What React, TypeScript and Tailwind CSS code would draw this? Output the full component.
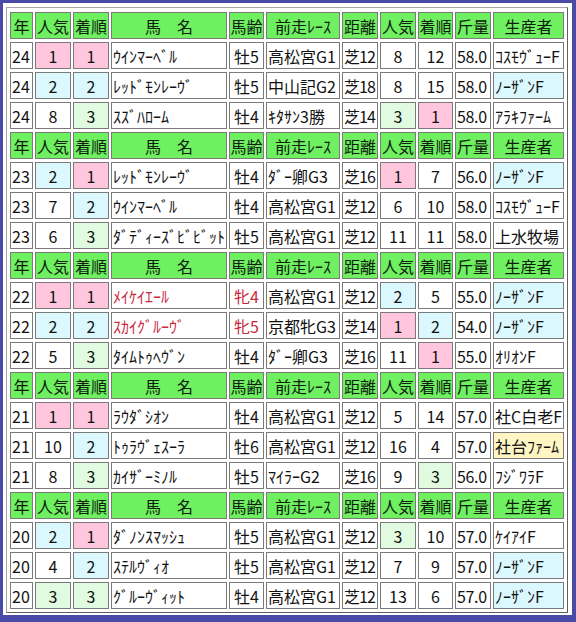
const HEAD = ["年", "人気", "着順", "馬　名", "馬齢", "前走ﾚｰｽ", "距離", "人気", "着順", "斤量", "生産者"];

// one tone letter per column: w white, p pink, b blue, g green, y yellow
type Row = { cells: string[]; tones: string; red?: boolean };

const GROUPS: Row[][] = [
  [
    { cells: ["24", "1", "1", "ｳｲﾝﾏｰﾍﾞﾙ", "牡5", "高松宮G1", "芝12", "8", "12", "58.0", "ｺｽﾓｳﾞｭｰF"], tones: "wppwwwwwwww" },
    { cells: ["24", "2", "2", "ﾚｯﾄﾞﾓﾝﾚｰｳﾞ", "牡5", "中山記G2", "芝18", "8", "15", "58.0", "ﾉｰｻﾞﾝF"], tones: "wbbwwwwwwwb" },
    { cells: ["24", "8", "3", "ｽｽﾞﾊﾛｰﾑ", "牡4", "ｷﾀｻﾝ3勝", "芝14", "3", "1", "58.0", "ｱﾗｷﾌｧｰﾑ"], tones: "wwgwwwwgpww" },
  ],
  [
    { cells: ["23", "2", "1", "ﾚｯﾄﾞﾓﾝﾚｰｳﾞ", "牡4", "ﾀﾞｰ卿G3", "芝16", "1", "7", "56.0", "ﾉｰｻﾞﾝF"], tones: "wbpwwwwpwwb" },
    { cells: ["23", "7", "2", "ｳｲﾝﾏｰﾍﾞﾙ", "牡4", "高松宮G1", "芝12", "6", "10", "58.0", "ｺｽﾓｳﾞｭｰF"], tones: "wwbwwwwwwww" },
    { cells: ["23", "6", "3", "ﾀﾞﾃﾞｨｰｽﾞﾋﾞﾋﾞｯﾄ", "牡5", "高松宮G1", "芝12", "11", "11", "58.0", "上水牧場"], tones: "wwgwwwwwwww" },
  ],
  [
    { cells: ["22", "1", "1", "ﾒｲｹｲｴｰﾙ", "牝4", "高松宮G1", "芝12", "2", "5", "55.0", "ﾉｰｻﾞﾝF"], tones: "wppwwwwbwwb", red: true },
    { cells: ["22", "2", "2", "ｽｶｲｸﾞﾙｰｳﾞ", "牝5", "京都牝G3", "芝14", "1", "2", "54.0", "ﾉｰｻﾞﾝF"], tones: "wbbwwwwpbwb", red: true },
    { cells: ["22", "5", "3", "ﾀｲﾑﾄｩﾍｳﾞﾝ", "牡4", "ﾀﾞｰ卿G3", "芝16", "11", "1", "55.0", "ｵﾘｵﾝF"], tones: "wwgwwwwwpww" },
  ],
  [
    { cells: ["21", "1", "1", "ﾗｳﾀﾞｼｵﾝ", "牡4", "高松宮G1", "芝12", "5", "14", "57.0", "社C白老F"], tones: "wppwwwwwwww" },
    { cells: ["21", "10", "2", "ﾄｩﾗｳﾞｪｽｰﾗ", "牡6", "高松宮G1", "芝12", "16", "4", "57.0", "社台ﾌｧｰﾑ"], tones: "wwbwwwwwwwy" },
    { cells: ["21", "8", "3", "ｶｲｻﾞｰﾐﾉﾙ", "牡5", "ﾏｲﾗｰG2", "芝16", "9", "3", "56.0", "ﾌｼﾞﾜﾗF"], tones: "wwgwwwwwgww" },
  ],
  [
    { cells: ["20", "2", "1", "ﾀﾞﾉﾝｽﾏｯｼｭ", "牡5", "高松宮G1", "芝12", "3", "10", "57.0", "ｹｲｱｲF"], tones: "wbpwwwwgwww" },
    { cells: ["20", "4", "2", "ｽﾃﾙｳﾞｨｵ", "牡5", "高松宮G1", "芝12", "7", "9", "57.0", "ﾉｰｻﾞﾝF"], tones: "wwbwwwwwwwb" },
    { cells: ["20", "3", "3", "ｸﾞﾙｰｳﾞｨｯﾄ", "牡4", "高松宮G1", "芝12", "13", "6", "57.0", "ﾉｰｻﾞﾝF"], tones: "wggwwwwwwwb" },
  ],
];

const TONE: Record<string, string> = {
  w: "bg-white",
  p: "bg-[#ffc6de]",
  b: "bg-[#dcf8ff]",
  g: "bg-[#e0fbe0]",
  y: "bg-[#fff6c4]",
};

const ALIGN = [
  "justify-start",
  "justify-center",
  "justify-center",
  "justify-start",
  "justify-center",
  "justify-start",
  "justify-start tracking-[-0.06em]",
  "justify-center",
  "justify-center",
  "justify-start tracking-[-0.02em]",
  "justify-start",
];

const cellBase =
  "flex h-[27px] items-center overflow-hidden whitespace-nowrap border border-[#7a7a7a] px-[1px] text-[16px] leading-none";

export default function App() {
  return (
    <div
      className="h-[622px] w-[576px] border-b-[7px] border-l-[3px] border-r-[4px] border-t-[3px] border-[#4a4aa8] bg-white pb-[2px] pl-[3px] pr-[4px] pt-[4px] text-[#111]"
      style={{ fontFamily: '"Noto Sans CJK JP", "Noto Sans", sans-serif' }}
    >
      <div className="border border-b-[#606060] border-l-[#a8a8a8] border-r-[#606060] border-t-[#a8a8a8] pb-[3px] pl-[3px] pr-[3px] pt-[4px]">
        <div className="grid grid-cols-[23px_36px_36px_116px_35px_74px_36px_36px_35px_36px_71px] gap-x-[2px] gap-y-[3px]">
          {GROUPS.map((group, gi) => [
            ...HEAD.map((h, i) => (
              <div key={`h${gi}-${i}`} className={`${cellBase} justify-center bg-[#6ef060] text-[#102010]`}>
                {h}
              </div>
            )),
            ...group.flatMap((row, ri) =>
              row.cells.map((c, ci) => (
                <div
                  key={`r${gi}-${ri}-${ci}`}
                  className={`${cellBase} ${ALIGN[ci]} ${TONE[row.tones[ci]]} ${
                    row.red && (ci === 3 || ci === 4) ? "text-[#c8283c]" : ""
                  }`}
                >
                  {c}
                </div>
              ))
            ),
          ])}
        </div>
      </div>
    </div>
  );
}
